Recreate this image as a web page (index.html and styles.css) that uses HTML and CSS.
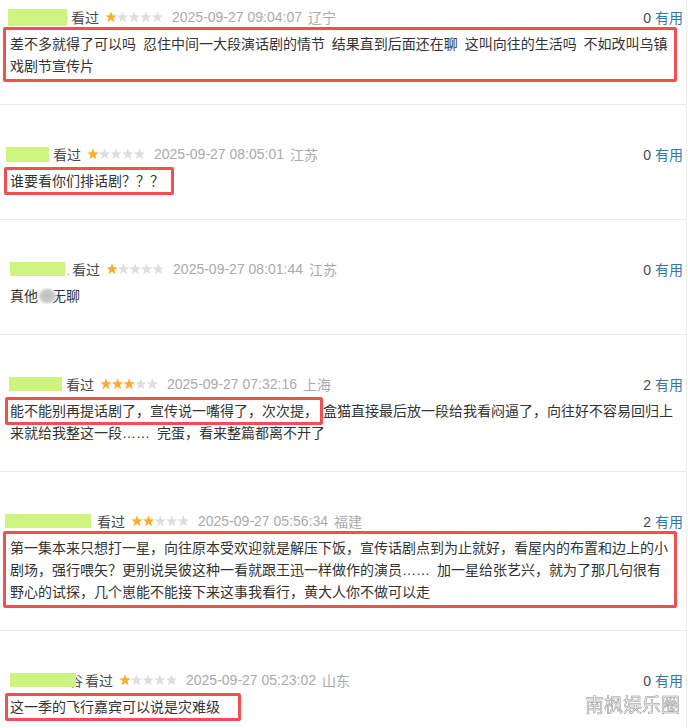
FILE: index.html
```html
<!DOCTYPE html>
<html lang="zh-CN">
<head>
    <meta charset="UTF-8">
    <meta name="viewport" content="width=device-width, initial-scale=1.0">
    <title>短评</title>
    <link rel="stylesheet" href="styles.css">
</head>
<body>
    <svg class="defs" width="0" height="0" aria-hidden="true">
        <symbol id="star" viewBox="0 0 12 12">
            <polygon points="6,0.3 7.47,4.28 11.71,4.45 8.38,7.07 9.53,11.15 6,8.8 2.47,11.15 3.62,7.07 0.29,4.45 4.53,4.28"/>
        </symbol>
    </svg>

    <div class="comments">
        <div class="comment">
            <div class="info">
                <span class="mask" style="width:59px;height:17px;margin-left:-2px"></span>
                <span class="status">看过</span>
                <svg class="stars" width="58" height="12" viewBox="0 0 58 12">
                    <use href="#star" class="on" x="0" width="12" height="12"/>
                    <use href="#star" class="off" x="11.6" width="12" height="12"/>
                    <use href="#star" class="off" x="23.2" width="12" height="12"/>
                    <use href="#star" class="off" x="34.8" width="12" height="12"/>
                    <use href="#star" class="off" x="46.4" width="12" height="12"/>
                </svg>
                <span class="time">2025-09-27 09:04:07</span>
                <span class="loc">辽宁</span>
                <span class="votes">0 <a class="useful">有用</a></span>
            </div>
            <p class="text boxed">差不多就得了可以吗 忍住中间一大段演话剧的情节 结果直到后面还在聊 这叫向往的生活吗 不如改叫乌镇戏剧节宣传片</p>
        </div>

        <div class="comment">
            <div class="info">
                <span class="mask" style="width:43px;height:15px;margin-left:-4px"></span>
                <span class="status">看过</span>
                <svg class="stars" width="58" height="12" viewBox="0 0 58 12">
                    <use href="#star" class="on" x="0" width="12" height="12"/>
                    <use href="#star" class="off" x="11.6" width="12" height="12"/>
                    <use href="#star" class="off" x="23.2" width="12" height="12"/>
                    <use href="#star" class="off" x="34.8" width="12" height="12"/>
                    <use href="#star" class="off" x="46.4" width="12" height="12"/>
                </svg>
                <span class="time">2025-09-27 08:05:01</span>
                <span class="loc">江苏</span>
                <span class="votes">0 <a class="useful">有用</a></span>
            </div>
            <p class="text"><span class="mark mark-q">谁要看你们排话剧？？？</span></p>
        </div>

        <div class="comment">
            <div class="info">
                <span class="mask" style="width:55px;height:14px"></span>
                <span class="dot">.</span>
                <span class="status">看过</span>
                <svg class="stars" width="58" height="12" viewBox="0 0 58 12">
                    <use href="#star" class="on" x="0" width="12" height="12"/>
                    <use href="#star" class="off" x="11.6" width="12" height="12"/>
                    <use href="#star" class="off" x="23.2" width="12" height="12"/>
                    <use href="#star" class="off" x="34.8" width="12" height="12"/>
                    <use href="#star" class="off" x="46.4" width="12" height="12"/>
                </svg>
                <span class="time">2025-09-27 08:01:44</span>
                <span class="loc">江苏</span>
                <span class="votes">0 <a class="useful">有用</a></span>
            </div>
            <p class="text">真他<span class="blur">妈</span>无聊</p>
        </div>

        <div class="comment">
            <div class="info">
                <span class="mask" style="width:53px;height:14px;margin-left:-1px"></span>
                <span class="status">看过</span>
                <svg class="stars" width="58" height="12" viewBox="0 0 58 12">
                    <use href="#star" class="on" x="0" width="12" height="12"/>
                    <use href="#star" class="on" x="11.6" width="12" height="12"/>
                    <use href="#star" class="on" x="23.2" width="12" height="12"/>
                    <use href="#star" class="off" x="34.8" width="12" height="12"/>
                    <use href="#star" class="off" x="46.4" width="12" height="12"/>
                </svg>
                <span class="time">2025-09-27 07:32:16</span>
                <span class="loc">上海</span>
                <span class="votes">2 <a class="useful">有用</a></span>
            </div>
            <p class="text"><span class="mark mark-open">能不能别再提话剧了，宣传说一嘴得了，次次提，</span><span>盒猫直接最后放一段给我看闷逼了，向往好不容易回归上</span><span>来就给我整这一段…… 完蛋，看来整篇都离不开了</span></p>
        </div>

        <div class="comment">
            <div class="info">
                <span class="mask" style="width:86px;height:14px;margin-left:-5px;margin-right:6px"></span>
                <span class="status">看过</span>
                <svg class="stars" width="58" height="12" viewBox="0 0 58 12">
                    <use href="#star" class="on" x="0" width="12" height="12"/>
                    <use href="#star" class="on" x="11.6" width="12" height="12"/>
                    <use href="#star" class="off" x="23.2" width="12" height="12"/>
                    <use href="#star" class="off" x="34.8" width="12" height="12"/>
                    <use href="#star" class="off" x="46.4" width="12" height="12"/>
                </svg>
                <span class="time">2025-09-27 05:56:34</span>
                <span class="loc">福建</span>
                <span class="votes">2 <a class="useful">有用</a></span>
            </div>
            <p class="text boxed">第一集本来只想打一星，向往原本受欢迎就是解压下饭，宣传话剧点到为止就好，看屋内的布置和边上的小剧场，强行喂矢？更别说吴彼这种一看就跟王迅一样做作的演员…… 加一星给张艺兴，就为了那几句很有野心的试探，几个崽能不能接下来这事我看行，黄大人你不做可以走</p>
        </div>

        <div class="comment">
            <div class="info">
                <span class="mask" style="width:66px;height:14px"></span>
                <span class="cut">谷</span>
                <span class="status">看过</span>
                <svg class="stars" width="58" height="12" viewBox="0 0 58 12">
                    <use href="#star" class="on" x="0" width="12" height="12"/>
                    <use href="#star" class="off" x="11.6" width="12" height="12"/>
                    <use href="#star" class="off" x="23.2" width="12" height="12"/>
                    <use href="#star" class="off" x="34.8" width="12" height="12"/>
                    <use href="#star" class="off" x="46.4" width="12" height="12"/>
                </svg>
                <span class="time">2025-09-27 05:23:02</span>
                <span class="loc">山东</span>
                <span class="votes">0 <a class="useful">有用</a></span>
            </div>
            <p class="text"><span class="mark mark-long">这一季的飞行嘉宾可以说是灾难级</span></p>
        </div>
    </div>

    <div class="watermark">南枫娱乐圈</div>
</body>
</html>
```

FILE: styles.css
```css
body {
    margin: 0;
    background: #fff;
    color: #333;
    font-family: "Liberation Sans", "Noto Sans CJK SC", sans-serif;
    font-size: 14px;
    overflow: hidden;
}
.defs { position: absolute; }
.comments {
    width: 686px;
    border-right: 1px solid #f0f0f0;
}
.comment {
    padding: 38px 3px 27px 10px;
    border-bottom: 1px solid #ebebeb;
}
.comment:first-child { padding-top: 6px; }

/* header row */
.info {
    display: flex;
    align-items: center;
    height: 22px;
    white-space: nowrap;
}
.mask {
    display: inline-block;
    position: relative;
    z-index: 1;
    background: #ccf47f;
    margin-right: 4px;
}
.dot {
    color: #888;
    font-size: 11px;
    margin: 4px 2px 0 -2px;
}
.cut {
    color: #555;
    margin: 0 2px 0 -11px;
}
.status { color: #494949; }
.stars { margin-left: 6px; }
.stars .on { fill: #ffac2d; }
.stars .off { fill: #dedede; }
.time {
    margin-left: 9px;
    color: #aaa;
}
.loc {
    margin-left: 6px;
    color: #aaa;
}
.votes {
    margin-left: auto;
    color: #494949;
}
.useful { color: #3377aa; }

/* comment body */
.text {
    margin: 5px 7px 0 0;
    line-height: 22px;
    word-spacing: 3px;
}
.text.boxed {
    margin: -1px 6px -5px -7px;
    padding: 3px 4px 2px 4px;
    border: 3px solid #f05050;
    border-radius: 2px;
}
.mark {
    padding: 3px 2px;
    margin: 0 -5px;
    border: 3px solid #f05050;
    border-radius: 2px;
}
.mark-open { margin-right: 0; }
.mark-q {
    margin-left: -6px;
    padding-left: 3px;
    padding-right: 7px;
    margin-right: -10px;
}
.mark-long {
    padding-right: 18px;
    margin-right: -21px;
}
.blur {
    position: relative;
    z-index: 1;
    padding: 1px 6px 1px 1px;
    margin: 0 -6px 0 -1px;
    color: transparent;
    background: radial-gradient(closest-side, #bdbdbd, #cacaca 60%, rgba(225, 225, 225, 0.7) 85%, rgba(255, 255, 255, 0));
}

.watermark {
    position: fixed;
    right: 8px;
    bottom: 11px;
    font-size: 19px;
    color: #f4f4f4;
    -webkit-text-stroke: 0.5px #8f8f8f;
}
```
